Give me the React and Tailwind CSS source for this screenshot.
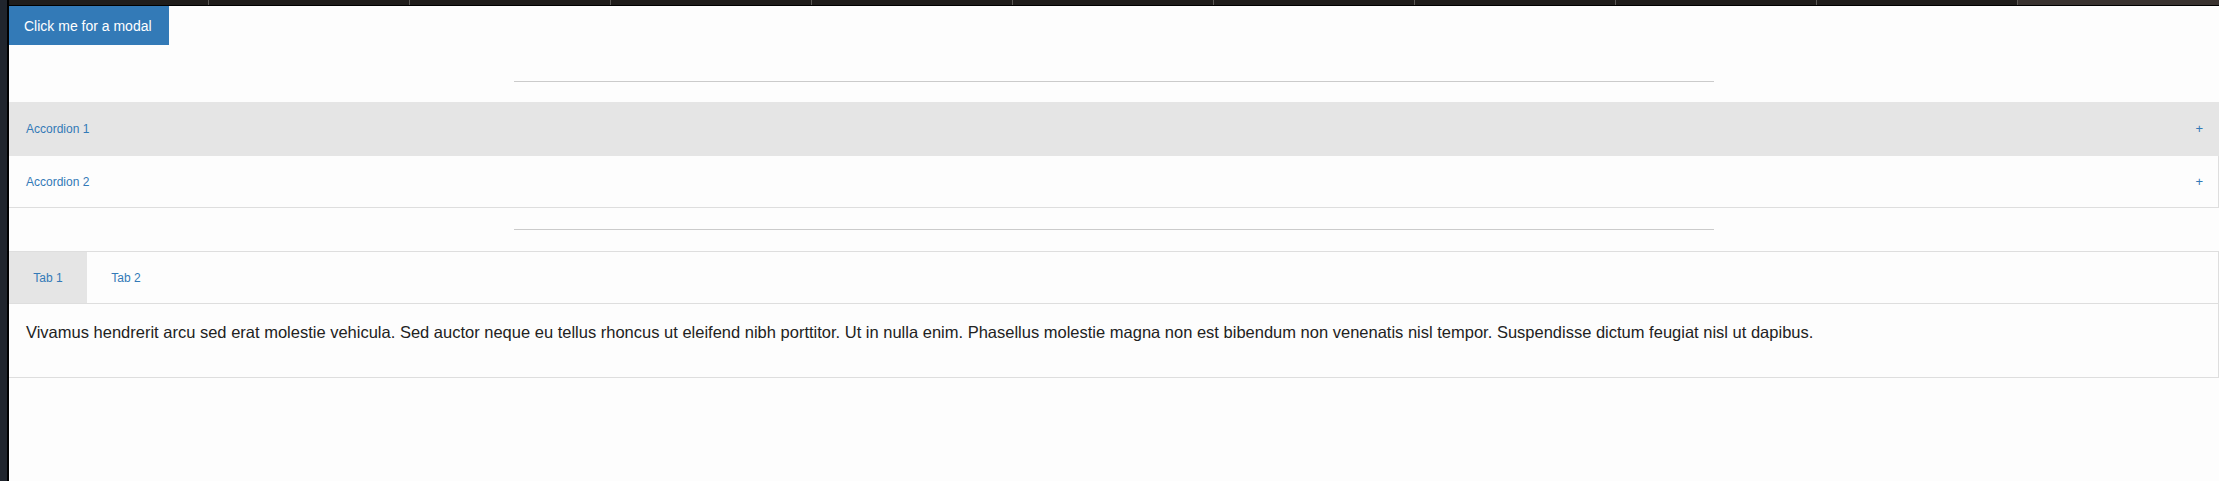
import React, { useState } from 'react';

const segments = Array.from({ length: 11 }, (_, i) => i);

const accordionItems = [
    { id: 1, title: 'Accordion 1' },
    { id: 2, title: 'Accordion 2' },
];

const tabs = [
    { id: 1, label: 'Tab 1' },
    { id: 2, label: 'Tab 2' },
];

const App = () => {
    const [activeTab, setActiveTab] = useState(1);
    const [hovered, setHovered] = useState(1);

    return (
        <div className="flex min-h-[481px] bg-[#fdfdfd] font-['Liberation_Sans',Arial,sans-serif]">
            {/* left window edge */}
            <div className="w-[7px] shrink-0 bg-[#20252d] border-r-2 border-black box-content" />

            <div className="flex-1 min-w-0 flex flex-col">
                {/* top strip */}
                <div className="flex h-[6px] bg-[#201d1b] border-b border-black box-border overflow-hidden">
                    {segments.map(i => (
                        <div
                            key={i}
                            className={
                                i === 10
                                    ? 'w-[201px] shrink-0 bg-[#3a3330]'
                                    : i === 0
                                        ? 'w-[200px] shrink-0 border-r border-[#5a5754]'
                                        : 'w-[201px] shrink-0 border-r border-[#5a5754]'
                            }
                        />
                    ))}
                </div>

                <div>
                    <button className="h-[39px] pl-[15px] pr-[17px] bg-[#337ab7] text-white text-[14px] leading-none">
                        Click me for a modal
                    </button>
                </div>

                <div className="pt-[36px] pb-[20px] flex justify-center">
                    <div className="w-[1200px] h-px bg-[#cbcbcb]" />
                </div>

                {/* accordion */}
                <div>
                    {accordionItems.map(item => (
                        <div
                            key={item.id}
                            onMouseEnter={() => setHovered(item.id)}
                            className={
                                item.id === hovered
                                    ? 'h-[54px] flex items-center justify-between pl-[17px] pr-[16px] bg-[#e5e5e5] cursor-pointer'
                                    : 'h-[52px] flex items-center justify-between pl-[17px] pr-[15px] border-r border-b border-[#dedede] cursor-pointer'
                            }
                        >
                            <span className="text-[12px] text-[#337ab7]">{item.title}</span>
                            <span className="text-[13px] text-[#337ab7]">+</span>
                        </div>
                    ))}
                </div>

                <div className="pt-[21px] pb-[21px] flex justify-center">
                    <div className="w-[1200px] h-px bg-[#cbcbcb]" />
                </div>

                {/* tabs */}
                <div className="border-t border-r border-b border-[#dedede]">
                    <div className="flex h-[52px] border-b border-[#dedede]">
                        {tabs.map(tab => (
                            <button
                                key={tab.id}
                                onClick={() => setActiveTab(tab.id)}
                                className={
                                    activeTab === tab.id
                                        ? 'w-[78px] h-full bg-[#e5e5e5] text-[12px] text-[#337ab7]'
                                        : 'w-[78px] h-full text-[12px] text-[#337ab7]'
                                }
                            >
                                {tab.label}
                            </button>
                        ))}
                    </div>
                    <div className="h-[73px] pl-[17px] pt-[18px]">
                        {activeTab === 1 ? (
                            <p className="text-[16.5px] leading-[21px] text-[#222]">
                                Vivamus hendrerit arcu sed erat molestie vehicula. Sed auctor neque eu tellus rhoncus ut eleifend nibh porttitor. Ut in nulla enim. Phasellus molestie magna non est bibendum non venenatis nisl tempor. Suspendisse dictum feugiat nisl ut dapibus.
                            </p>
                        ) : (
                            <p className="text-[16.5px] leading-[21px] text-[#222]">
                                Donec vel mauris quam. Nulla facilisi. Integer semper lacus eu nulla tempor.
                            </p>
                        )}
                    </div>
                </div>
            </div>
        </div>
    );
};

export default App;
